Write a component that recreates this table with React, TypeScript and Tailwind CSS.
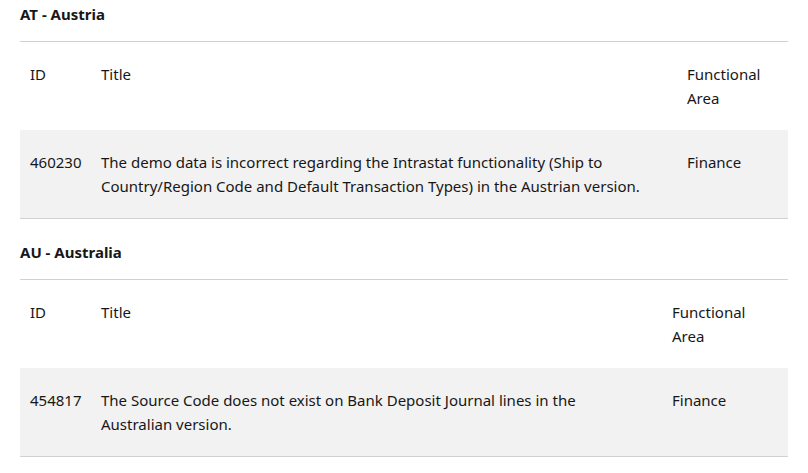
const sections = [
  {
    heading: "AT - Austria",
    areaWidth: "w-[111px]",
    titlePad: "pr-[10px]",
    rows: [
      {
        id: "460230",
        title:
          "The demo data is incorrect regarding the Intrastat functionality (Ship to Country/Region Code and Default Transaction Types) in the Austrian version.",
        area: "Finance",
      },
    ],
  },
  {
    heading: "AU - Australia",
    areaWidth: "w-[126px]",
    titlePad: "pr-[24px]",
    rows: [
      {
        id: "454817",
        title: "The Source Code does not exist on Bank Deposit Journal lines in the Australian version.",
        area: "Finance",
      },
    ],
  },
];

export default function App() {
  return (
    <div className="min-h-screen bg-white px-5 pt-[2px] font-['Noto_Sans',sans-serif] text-[15px] leading-6 text-[#171717]">
      {sections.map((s, i) => (
        <section key={s.heading} className={i > 0 ? "mt-[21px]" : ""}>
          <h3 className="text-[15px] font-bold leading-6">{s.heading}</h3>
          <table className="mt-[15px] w-[768px] table-fixed border-collapse border-t border-[#d1d1d1]">
            <thead>
              <tr>
                <th className="w-[71px] px-[10px] py-5 text-left align-top font-normal">ID</th>
                <th className={`pl-[10px] ${s.titlePad} py-5 text-left align-top font-normal`}>Title</th>
                <th className={`${s.areaWidth} px-[10px] py-5 text-left align-top font-normal`}>
                  Functional Area
                </th>
              </tr>
            </thead>
            <tbody>
              {s.rows.map((r) => (
                <tr key={r.id} className="border-b border-[#d1d1d1] bg-[#f2f2f2]">
                  <td className="px-[10px] py-5 align-top">{r.id}</td>
                  <td className={`pl-[10px] ${s.titlePad} py-5 align-top`}>{r.title}</td>
                  <td className="px-[10px] py-5 align-top">{r.area}</td>
                </tr>
              ))}
            </tbody>
          </table>
        </section>
      ))}
    </div>
  );
}
